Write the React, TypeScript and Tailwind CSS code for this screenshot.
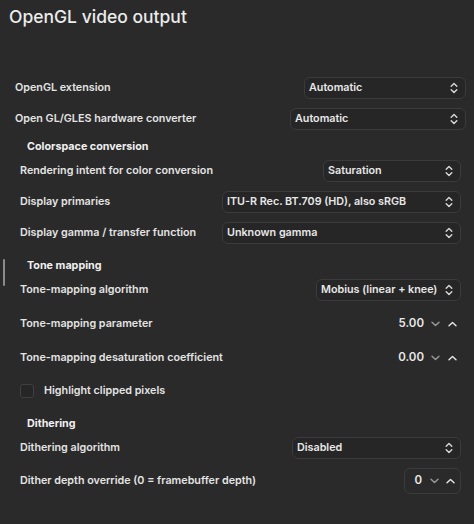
import React from 'react'

const font = { fontFamily: 'Inter, "Noto Sans", sans-serif' }

const UpDown = () => (
  <svg width="8" height="12" viewBox="0 0 8 12" fill="none" stroke="#d8d8d8" strokeWidth="1.4" strokeLinecap="round" strokeLinejoin="round">
    <path d="M1.2 4.2 L4 1.4 L6.8 4.2" />
    <path d="M1.2 7.8 L4 10.6 L6.8 7.8" />
  </svg>
)

const Down = () => (
  <svg width="9" height="6" viewBox="0 0 9 6" fill="none" stroke="#9a9a9a" strokeWidth="1.4" strokeLinecap="round" strokeLinejoin="round">
    <path d="M1 1.2 L4.5 4.6 L8 1.2" />
  </svg>
)

const Up = () => (
  <svg width="9" height="6" viewBox="0 0 9 6" fill="none" stroke="#e6e6e6" strokeWidth="1.4" strokeLinecap="round" strokeLinejoin="round">
    <path d="M1 4.8 L4.5 1.4 L8 4.8" />
  </svg>
)

const Select = ({ value, w }: { value: string; w: string }) => (
  <div className={`${w} h-[22px] flex items-center justify-between rounded-[6px] border border-[#3b3b3b] bg-[#262626] pl-[4px] pr-[7px]`}>
    <span className="text-[10.75px] font-semibold text-[#e8e8e8] whitespace-nowrap">{value}</span>
    <UpDown />
  </div>
)

const Row = ({ label, children, cls }: { label: string; children?: React.ReactNode; cls: string }) => (
  <div className={`flex items-center justify-between ${cls}`}>
    <span className="text-[10.75px] font-semibold text-[#e4e4e4]">{label}</span>
    {children}
  </div>
)

const Header = ({ text, cls }: { text: string; cls: string }) => (
  <div className={`h-[20px] flex items-center pl-[27px] text-[10.75px] font-bold text-[#f0f0f0] ${cls}`}>{text}</div>
)

const Spin = ({ value }: { value: string }) => (
  <div className="flex items-center pr-[4px]">
    <span className="text-[11.5px] font-semibold text-[#e8e8e8] mr-[7px]">{value}</span>
    <Down />
    <span className="w-[8px]" />
    <Up />
  </div>
)

export default function App() {
  return (
    <div className="w-[474px] h-[524px] bg-[#2a2a2a] overflow-hidden" style={font}>
      <div className="h-[34px] flex items-center pl-[9px] text-[17.5px] font-medium text-[#ececec]">OpenGL video output</div>

      <Row label="OpenGL extension" cls="h-[22px] mt-[43px] pl-[15px] pr-[8px]">
        <Select value="Automatic" w="w-[162px]" />
      </Row>
      <Row label="Open GL/GLES hardware converter" cls="h-[22px] mt-[9px] pl-[15px] pr-[8px]">
        <Select value="Automatic" w="w-[176px]" />
      </Row>

      <Header text="Colorspace conversion" cls="mt-[7px]" />
      <Row label="Rendering intent for color conversion" cls="h-[22px] mt-[3px] pl-[20px] pr-[13px]">
        <Select value="Saturation" w="w-[138px]" />
      </Row>
      <Row label="Display primaries" cls="h-[22px] mt-[9px] pl-[20px] pr-[13px]">
        <Select value="ITU-R Rec. BT.709 (HD), also sRGB" w="w-[239px]" />
      </Row>
      <Row label="Display gamma / transfer function" cls="h-[22px] mt-[9px] pl-[20px] pr-[13px]">
        <Select value="Unknown gamma" w="w-[239px]" />
      </Row>

      <div className="relative mt-[12px]">
        <div className="absolute left-[3px] top-[3px] w-[2px] h-[27px] bg-[#8a8a8a] rounded-full" />
        <Header text="Tone mapping" cls="" />
      </div>
      <Row label="Tone-mapping algorithm" cls="h-[22px] mt-[3px] pl-[20px] pr-[13px]">
        <Select value="Mobius (linear + knee)" w="w-[145px]" />
      </Row>
      <Row label="Tone-mapping parameter" cls="h-[22px] mt-[12px] pl-[20px] pr-[13px]">
        <Spin value="5.00" />
      </Row>
      <Row label="Tone-mapping desaturation coefficient" cls="h-[22px] mt-[12px] pl-[20px] pr-[13px]">
        <Spin value="0.00" />
      </Row>
      <div className="h-[22px] mt-[11px] flex items-center pl-[20px]">
        <div className="w-[14px] h-[14px] rounded-[3px] border border-[#3f3f3f] bg-[#262626]" />
        <span className="ml-[10px] text-[10.75px] font-semibold text-[#e4e4e4]">Highlight clipped pixels</span>
      </div>

      <Header text="Dithering" cls="mt-[12px]" />
      <Row label="Dithering algorithm" cls="h-[22px] mt-[3px] pl-[20px] pr-[13px]">
        <Select value="Disabled" w="w-[169px]" />
      </Row>
      <Row label="Dither depth override (0 = framebuffer depth)" cls="h-[26px] mt-[9px] pl-[20px] pr-[13px]">
        <div className="w-[57px] h-[26px] flex items-center justify-end rounded-[6px] border border-[#3b3b3b] pr-[5px]">
          <span className="text-[11.5px] font-semibold text-[#e8e8e8] mr-[8px]">0</span>
          <Down />
          <span className="w-[7px]" />
          <Up />
        </div>
      </Row>
    </div>
  )
}
